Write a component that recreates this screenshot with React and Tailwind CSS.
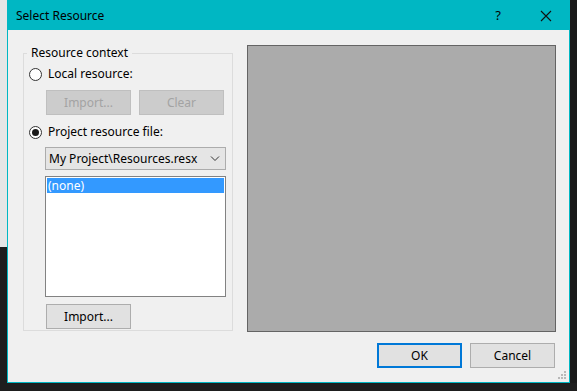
import React from "react";

const font = { fontFamily: '"Noto Sans", "Segoe UI", sans-serif' };

function Radio({ checked, label }) {
  return (
    <div className="flex items-center h-4 pl-[5px]">
      <div className="w-[13px] h-[13px] rounded-full border border-[#333333] bg-white flex items-center justify-center">
        {checked && <div className="w-[7px] h-[7px] rounded-full bg-[#1a1a1a]" />}
      </div>
      <span className="ml-[6px] text-[12px] leading-4 text-black">{label}</span>
    </div>
  );
}

function Btn({ children, disabled, primary, w = "w-[85px]" }) {
  return (
    <div
      className={
        `${w} h-[25px] flex items-center justify-center text-[12px] ` +
        (disabled
          ? "bg-[#cccccc] border border-[#bfbfbf] text-[#a3a3a3]"
          : primary
          ? "bg-[#e1e1e1] border-2 border-[#0078d7] text-black"
          : "bg-[#e1e1e1] border border-[#adadad] text-black")
      }
    >
      {children}
    </div>
  );
}

export default function App() {
  return (
    <div className="w-[577px] h-[391px] bg-[#1c1c1c] flex flex-col overflow-hidden" style={font}>
      <div className="flex h-[383px]">
        {/* left background strip */}
        <div className="w-[7px] flex flex-col">
          <div className="h-[247px] bg-[#e6e6e6]" />
          <div className="flex-1 bg-[#1e1e1e]" />
        </div>
        {/* window */}
        <div className="w-[563px] flex flex-col border-x border-b border-[#00b7c3] bg-[#f0f0f0] relative">
          <div className="h-[30px] bg-[#00b7c3] flex items-center pt-[2px] text-[12px] text-black">
            <span className="ml-[8px]">Select Resource</span>
            <span className="ml-auto mr-[39px] text-[13px]">?</span>
            <svg width="12" height="12" viewBox="0 0 12 12" className="mr-[17px]">
              <path d="M1 1 L11 11 M11 1 L1 11" stroke="#111" strokeWidth="1.1" />
            </svg>
          </div>
          <div className="flex pt-[15px] pl-[15px]">
            <fieldset className="w-[210px] h-[286px] border border-[#dcdcdc] px-0 pb-[3px] m-0">
              <legend className="ml-[3px] px-[4px] text-[12px] leading-4 text-black">Resource context</legend>
              <div className="mt-[5px]">
                <Radio label="Local resource:" />
              </div>
              <div className="flex gap-[8px] ml-[22px] mt-[8px]">
                <Btn disabled>Import...</Btn>
                <Btn disabled>Clear</Btn>
              </div>
              <div className="mt-[9px]">
                <Radio checked label="Project resource file:" />
              </div>
              <div className="ml-[21px] mt-[7px] w-[181px] h-[23px] bg-[#e5e5e5] border border-[#acacac] flex items-center text-[12px] text-black">
                <span className="ml-[3px]">My Project\Resources.resx</span>
                <svg width="10" height="6" viewBox="0 0 10 6" className="ml-auto mr-[5px]">
                  <path d="M1 0.5 L5 4.5 L9 0.5" stroke="#333" strokeWidth="1" fill="none" />
                </svg>
              </div>
              <div className="ml-[21px] mt-[6px] w-[181px] h-[121px] bg-white border border-[#828282] p-[1px]">
                <div className="h-[15px] bg-[#3399ff] text-white text-[12px] leading-[15px] pl-[1px]">(none)</div>
              </div>
              <div className="ml-[22px] mt-[7px]">
                <Btn>Import...</Btn>
              </div>
            </fieldset>
            <div className="ml-[14px] mt-0 w-[309px] h-[287px] bg-[#ababab] border border-[#646464]" />
          </div>
          <div className="flex justify-end gap-[8px] mt-[11px] pr-[14px]">
            <Btn primary>OK</Btn>
            <Btn>Cancel</Btn>
          </div>
          <svg width="10" height="10" viewBox="0 0 10 10" className="absolute right-[2px] bottom-[2px]">
            <rect x="7" y="1" width="2" height="2" fill="#b8b8b8" />
            <rect x="4" y="4" width="2" height="2" fill="#b8b8b8" />
            <rect x="7" y="4" width="2" height="2" fill="#b8b8b8" />
            <rect x="1" y="7" width="2" height="2" fill="#b8b8b8" />
            <rect x="4" y="7" width="2" height="2" fill="#b8b8b8" />
            <rect x="7" y="7" width="2" height="2" fill="#b8b8b8" />
          </svg>
        </div>
        <div className="flex-1 bg-[#1a1a1a]" />
      </div>
      <div className="flex-1 bg-[#1e1e1e]" />
    </div>
  );
}
